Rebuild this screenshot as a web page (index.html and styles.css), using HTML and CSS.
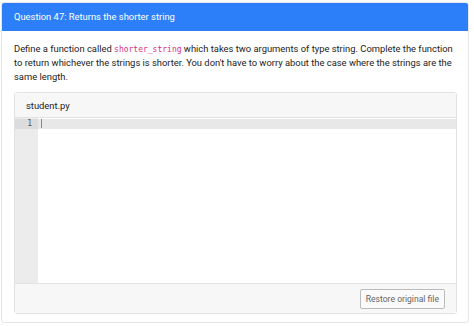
FILE: index.html
```html
<!DOCTYPE html>
<html lang="en">
<head>
    <meta charset="UTF-8">
    <title>Question 47</title>
    <link rel="stylesheet" href="styles.css">
</head>
<body>
    <div class="card">
        <div class="card-header">Question 47: Returns the shorter string</div>
        <div class="card-body">
            <p class="prompt">Define a function called <code>shorter_string</code> which takes two arguments of type string. Complete the function to return whichever the strings is shorter. You don't have to worry about the case where the strings are the same length.</p>
            <div class="editor">
                <div class="editor-header">student.py</div>
                <div class="editor-code">
                    <div class="gutter">
                        <div class="line-no">1</div>
                    </div>
                    <div class="code">
                        <div class="line active"><span class="cursor"></span></div>
                    </div>
                </div>
                <div class="editor-footer">
                    <button class="restore">Restore original file</button>
                </div>
            </div>
        </div>
    </div>
</body>
</html>
```

FILE: styles.css
```css
* {
    margin: 0;
    padding: 0;
    box-sizing: border-box;
}
body {
    font-family: Roboto, 'Liberation Sans', sans-serif;
    font-size: 9.4px;
    color: #222;
    background: #fff;
    padding: 2px 5px 0 1px;
}
.card {
    border: 1px solid #e6e6e6;
    border-radius: 3px;
    overflow: hidden;
}
.card-header {
    background: #2d7ff9;
    color: #fff;
    height: 28px;
    line-height: 28px;
    padding: 0 12px;
    font-size: 9.4px;
}
.card-body {
    padding: 11px 11px 8px 12px;
}
.prompt {
    line-height: 14px;
    margin-bottom: 8px;
}
.prompt code {
    font-family: 'DejaVu Sans Mono', monospace;
    font-size: 8px;
    line-height: 1;
    color: #d63384;
}
.editor {
    border: 1px solid #e2e2e2;
    border-radius: 3px;
}
.editor-header {
    background: #f7f7f7;
    height: 25px;
    line-height: 25px;
    padding: 0 11px;
    border-bottom: 1px solid #e2e2e2;
}
.editor-code {
    display: flex;
    height: 165px;
    background: #fff;
}
.gutter {
    width: 23px;
    background: #ececec;
    padding-top: 1px;
}
.line-no {
    height: 10px;
    line-height: 10px;
    background: #dcdcdc;
    text-align: right;
    padding-right: 6px;
    font-family: 'DejaVu Sans Mono', monospace;
    font-size: 8px;
    color: #555;
}
.code {
    flex: 1;
    padding-top: 1px;
}
.line {
    height: 10px;
    padding-left: 3px;
}
.line.active {
    background: #e8e8e8;
}
.cursor {
    display: inline-block;
    width: 1px;
    height: 9px;
    background: #888;
}
.editor-footer {
    background: #f7f7f7;
    border-top: 1px solid #e2e2e2;
    height: 30px;
    display: flex;
    align-items: center;
    justify-content: flex-end;
    padding-right: 11px;
}
.restore {
    font-family: Roboto, 'Liberation Sans', sans-serif;
    font-size: 8.6px;
    color: #666;
    background: #fafafa;
    border: 1px solid #bbb;
    border-radius: 2px;
    height: 20px;
    padding: 0 5px;
}
```
